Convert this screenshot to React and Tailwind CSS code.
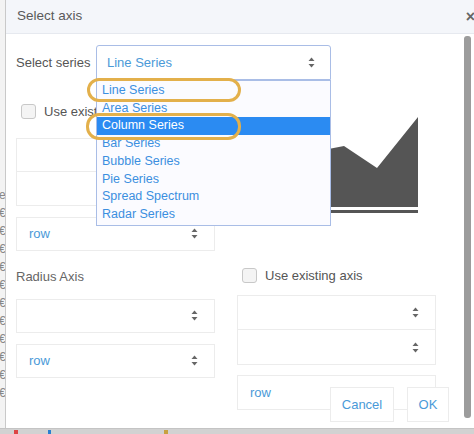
import React from "react";

const Chev = () => (
  <svg width="7" height="11" viewBox="0 0 7 11" className="shrink-0">
    <path d="M3.5 0.5 L6.5 4 L0.5 4 Z" fill="#666" />
    <path d="M3.5 10.5 L6.5 7 L0.5 7 Z" fill="#666" />
  </svg>
);

const Box = ({ text, className = "" }) => (
  <div className={`flex items-center justify-between border border-[#ececec] bg-white pl-[12px] pr-[16px] ${className}`}>
    <span className="text-[13px] text-[#4a9ad8]">{text}</span>
    <Chev />
  </div>
);

const Check = ({ label }) => (
  <div className="flex items-center gap-[8px] text-[13px] text-[#555]">
    <div className="h-[15px] w-[15px] rounded-[3px] border border-[#c8c8c8] bg-[#f4f4f4]" />
    <span>{label}</span>
  </div>
);

const items = ["Line Series", "Area Series", "Column Series", "Bar Series", "Bubble Series", "Pie Series", "Spread Spectrum", "Radar Series"];

export default function App() {
  return (
    <div className="flex h-[434px] w-[474px] flex-col overflow-hidden bg-[#ededed]" style={{ fontFamily: '"Liberation Sans", Arial, sans-serif' }}>
      <div className="flex min-h-0 flex-1">
        <div className="flex w-[6px] shrink-0 flex-col overflow-hidden border-r border-[#c9c9c9] bg-[#f3f3f3] pt-[186px] text-[12px] leading-[18px] text-[#888]">
          {["et", "€", "€", "€", "€", "€", "€", "€", "€", "€", "€", "€"].map((c, i) => (
            <span key={i} className="-ml-[1px] whitespace-nowrap">{c}</span>
          ))}
        </div>
        <div className="relative flex min-w-0 flex-1 flex-col bg-white">
          <div className="flex h-[34px] shrink-0 items-center justify-between border-b border-[#e6e9ef] bg-[#f4f6fa] pl-[11px] pr-0">
            <span className="text-[13.5px] text-[#5a5a5a]">Select axis</span>
            <span className="-mr-[1px] text-[16px] font-bold leading-none text-[#666]">×</span>
          </div>
          <div className="relative flex-1 pl-[10px]">
            <div className="mt-[11px] flex items-center">
              <span className="w-[80px] text-[13px] text-[#555]">Select series</span>
              <div className="flex h-[35px] w-[235px] items-center justify-between rounded-t-[3px] border border-[#a9bde6] bg-white pl-[10px] pr-[15px]">
                <span className="text-[13px] text-[#4a9ad8]">Line Series</span>
                <Chev />
              </div>
            </div>
            <div className="mt-[22px] grid grid-cols-[199px_199px] gap-x-[22px]">
              <div className="flex flex-col">
                <div className="pl-[5px]"><Check label="Use existing axis" /></div>
                <div className="mt-[16px] flex flex-col">
                  <Box className="h-[34px]" />
                  <Box className="h-[35px] -mt-[1px]" />
                </div>
                <Box text="row" className="mt-[11px] h-[34px]" />
              </div>
              <div className="relative">
                <svg width="199" height="120" viewBox="0 0 199 120" className="-mt-[5px] block">
                  <path d="M40 62 L107 49 L140 71 L181 20 L181 110 L40 110 Z" fill="#555" />
                  <rect x="60" y="113" width="121" height="3" fill="#555" />
                </svg>
              </div>
            </div>
            <div className="mt-[17px] grid grid-cols-[199px_199px] gap-x-[22px]">
              <div className="flex flex-col">
                <span className="text-[13px] text-[#666] leading-[18px]">Radius Axis</span>
                <Box className="mt-[13px] h-[34px]" />
                <Box text="row" className="mt-[11px] h-[34px]" />
              </div>
              <div className="flex flex-col">
                <div className="-mt-[2px] pl-[5px]"><Check label="Use existing axis" /></div>
                <div className="mt-[10px] flex flex-col">
                  <Box className="h-[35px]" />
                  <Box className="h-[36px] -mt-[1px]" />
                </div>
                <div className="mt-[10px] flex h-[35px] items-center border border-[#ececec] pl-[12px]">
                  <span className="text-[13px] text-[#4a9ad8]">row</span>
                </div>
              </div>
            </div>

            {/* dropdown list */}
            <div className="absolute left-[90px] top-[46px] z-10 flex w-[235px] flex-col border border-[#a9bde6] bg-[#fbfbff] pb-[1px] pt-[1px] text-[12.5px] leading-[17.7px]">
              {items.map((it, i) => (
                <div key={it} className={i === 2 ? "bg-[#2b8bf2] pl-[5px] text-white" : "pl-[5px] text-[#3b8fe0]"}>{it}</div>
              ))}
            </div>
            {/* highlight ovals */}
            <div className="pointer-events-none absolute left-[81px] top-[44px] z-20 h-[24px] w-[154px] rounded-[12px] border-[3px] border-[#e3b04b]" />
            <div className="pointer-events-none absolute left-[80px] top-[79px] z-20 h-[27px] w-[155px] rounded-[13px] border-[3px] border-[#e3b04b]" />

            {/* footer buttons */}
            <div className="absolute left-[324px] top-[353px] z-10 flex gap-[13px]">
              <div className="flex h-[35px] w-[64px] items-center justify-center border border-[#ececec] bg-white text-[13px] text-[#4a9ad8]">Cancel</div>
              <div className="flex h-[35px] w-[42px] items-center justify-center border border-[#ececec] bg-white text-[13px] text-[#4a9ad8]">OK</div>
            </div>
            {/* scrollbar */}
            <div className="absolute right-[3px] top-[2px] h-[382px] w-[7px] rounded-[3px] bg-[#9c9c9c]" />
          </div>
        </div>
      </div>
      <div className="relative h-[6px] shrink-0 border-t border-[#c4c4c4] bg-[#d2d2d2]">
        <div className="absolute left-[14px] top-[1px] h-[4px] w-[4px] bg-[#d44]" />
        <div className="absolute left-[48px] top-[1px] h-[4px] w-[3px] bg-[#2a7fd0]" />
        <div className="absolute left-[164px] top-[1px] h-[4px] w-[4px] bg-[#c8a040]" />
      </div>
    </div>
  );
}
